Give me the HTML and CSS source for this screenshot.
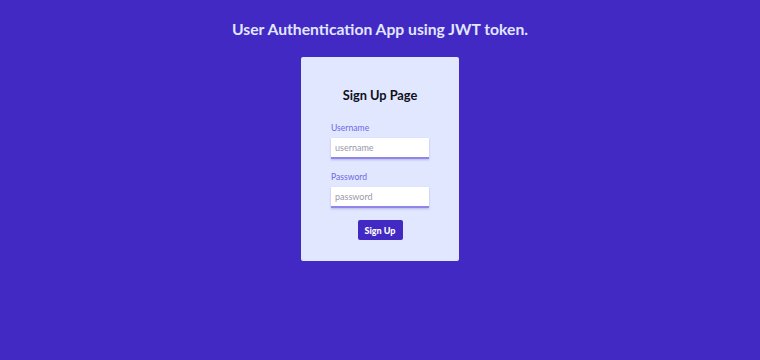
FILE: index.html
```html
<!doctype html>
<html>
<head>
<meta charset="utf-8">
<title>User Authentication App</title>
<link rel="stylesheet" href="styles.css">
</head>
<body>
<div class="app">
	<h1 class="app-title">User Authentication App using JWT token.</h1>
	<form class="card">
		<h2 class="card-title">Sign Up Page</h2>
		<div class="field">
			<label class="field-label" for="username">Username</label>
			<input class="field-input" id="username" type="text" placeholder="username">
		</div>
		<div class="field">
			<label class="field-label" for="password">Password</label>
			<input class="field-input" id="password" type="password" placeholder="password">
		</div>
		<button class="btn" type="button">Sign Up</button>
	</form>
</div>
</body>
</html>
```

FILE: styles.css
```css
*{margin:0; padding:0; box-sizing:border-box;}
html,body{height:100%;}
body{background:#4229c4; font-family:Lato,"Open Sans",sans-serif;}
.app{display:flex; flex-direction:column; align-items:center; padding-top:18px;}
.app-title{font-size:15.7px; font-weight:700; color:#e0e7ff; line-height:22px;}
.card{width:158px; height:204px; margin-top:17px; background:#e0e7ff; border-radius:2px; display:flex; flex-direction:column; align-items:center; padding-top:28px;}
.card-title{font-size:12.8px; font-weight:700; color:#0f0f1a; line-height:20px; margin-bottom:18px;}
.field{width:98px; display:flex; flex-direction:column; margin-bottom:13px;}
.field-label{font-size:8.6px; color:#6f67e4; line-height:11px; margin-bottom:4px;}
.field-input{width:98px; height:21px; border:0; border-bottom:2px solid #8f86e8; background:#fff; box-shadow:0 1px 2px rgba(60,40,160,0.25); font-family:inherit; font-size:9px; padding:0 4px; outline:none; color:#333;}
.field-input::placeholder{color:#9a9aa8;}
.btn{margin-top:-1px; width:45px; height:20px; background:#4229c4; color:#fff; border:0; border-radius:2px; font-family:inherit; font-size:9px; font-weight:900;}
```
